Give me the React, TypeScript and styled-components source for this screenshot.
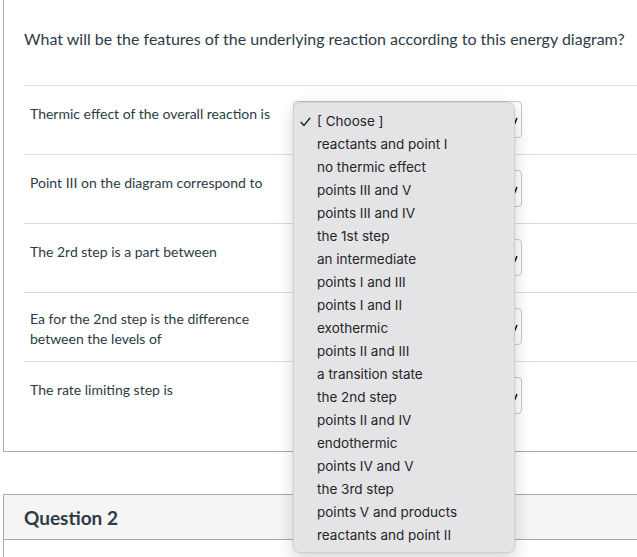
import React from "react";
import styled, { createGlobalStyle } from "styled-components";

const GlobalStyle = createGlobalStyle`
  html, body { margin: 0; padding: 0; background: #ffffff; overflow: hidden; }
  body { font-family: Lato, "Open Sans", sans-serif; color: #2d3b45; }
`;

const Page = styled.div`
  width: 637px;
  height: 557px;
  padding-left: 3px;
  box-sizing: border-box;
  overflow: hidden;
`;

const Card = styled.section`
  border-left: 1px solid #a8a8a8;
  border-bottom: 1px solid #a8a8a8;
  padding: 29px 0 21px 20px;
`;

const QuestionText = styled.p`
  margin: 0 0 36px;
  font-size: 16px;
  line-height: 20px;
  color: #2d3b45;
`;

const Answers = styled.div`
  display: flex;
  flex-direction: column;
`;

const Row = styled.div`
  display: flex;
  align-items: flex-start;
  height: 69px;
  box-sizing: border-box;
  border-top: 1px solid #dcdcdc;
`;

const Label = styled.div<{ $multi?: boolean }>`
  flex: 0 0 269px;
  box-sizing: border-box;
  padding: ${(p) => (p.$multi ? "16px" : "18px")} 6px 0 6px;
  font-size: 14px;
  line-height: 20px;
  color: #2d3b45;
`;

const SelectWrap = styled.div`
  position: relative;
  margin-top: 15px;
`;

const SelectBox = styled.div`
  width: 229px;
  height: 37px;
  box-sizing: border-box;
  border: 1px solid #c9c9c9;
  border-radius: 4px;
  background: #ffffff;
  display: flex;
  align-items: center;
  justify-content: flex-end;
  padding-right: 3px;
`;

const Menu = styled.ul`
  position: absolute;
  top: 1px;
  left: 0;
  z-index: 10;
  width: 222px;
  margin: 0;
  padding: 7px 0 5px;
  list-style: none;
  box-sizing: border-box;
  background: #e4e4e6;
  border: 1px solid #d0d0d2;
  border-radius: 7px;
  box-shadow: 0 6px 18px rgba(0, 0, 0, 0.16), 0 0 3px rgba(0, 0, 0, 0.08);
`;

const MenuItem = styled.li`
  position: relative;
  height: 23px;
  line-height: 23px;
  padding-left: 23px;
  font-family: "Inter", Roboto, "Liberation Sans", sans-serif;
  font-size: 13.5px;
  color: #262626;
  white-space: nowrap;
`;

const CheckMark = styled.svg`
  position: absolute;
  left: 6px;
  top: 7px;
`;

const Gap = styled.div`
  height: 42px;
`;

const Header = styled.div`
  border-left: 1px solid #a8a8a8;
  border-top: 1px solid #a8a8a8;
  border-bottom: 1px solid #a8a8a8;
  background: #f5f5f5;
  height: 44px;
  display: flex;
  align-items: center;
  padding-left: 20px;
`;

const HeaderTitle = styled.h2`
  margin: 0;
  font-size: 19px;
  font-weight: 700;
  color: #2d3b45;
`;

const Body = styled.div`
  border-left: 1px solid #a8a8a8;
  height: 40px;
`;

const Chevron = () => (
  <svg width="6" height="8" viewBox="0 0 6 8">
    <path d="M1 5.5 L3 7 L5 2" fill="none" stroke="#111" strokeWidth="1.5" />
  </svg>
);

const options = [
  "reactants and point I",
  "no thermic effect",
  "points III and V",
  "points III and IV",
  "the 1st step",
  "an intermediate",
  "points I and III",
  "points I and II",
  "exothermic",
  "points II and III",
  "a transition state",
  "the 2nd step",
  "points II and IV",
  "endothermic",
  "points IV and V",
  "the 3rd step",
  "points V and products",
  "reactants and point II",
];

const rows = [
  { label: "Thermic effect of the overall reaction is", open: true },
  { label: "Point III on the diagram correspond to" },
  { label: "The 2rd step is a part between" },
  { label: "Ea for the 2nd step is the difference between the levels of", multi: true },
  { label: "The rate limiting step is" },
];

export default function App() {
  return (
    <Page>
      <GlobalStyle />
      <Card>
        <QuestionText>
          What will be the features of the underlying reaction according to this energy diagram?
        </QuestionText>
        <Answers>
          {rows.map((r, i) => (
            <Row key={i}>
              <Label $multi={r.multi}>
                {r.multi ? (
                  <>
                    Ea for the 2nd step is the difference
                    <br />
                    between the levels of
                  </>
                ) : (
                  r.label
                )}
              </Label>
              <SelectWrap>
                <SelectBox>
                  <Chevron />
                </SelectBox>
                {r.open && (
                  <Menu>
                    <MenuItem>
                      <CheckMark width="11" height="10" viewBox="0 0 11 10">
                        <path
                          d="M1.2 5.4 L4 8.4 L9.8 1.2"
                          fill="none"
                          stroke="#262626"
                          strokeWidth="1.5"
                          strokeLinecap="round"
                          strokeLinejoin="round"
                        />
                      </CheckMark>
                      [ Choose ]
                    </MenuItem>
                    {options.map((o) => (
                      <MenuItem key={o}>{o}</MenuItem>
                    ))}
                  </Menu>
                )}
              </SelectWrap>
            </Row>
          ))}
        </Answers>
      </Card>
      <Gap />
      <Header>
        <HeaderTitle>Question 2</HeaderTitle>
      </Header>
      <Body />
    </Page>
  );
}
